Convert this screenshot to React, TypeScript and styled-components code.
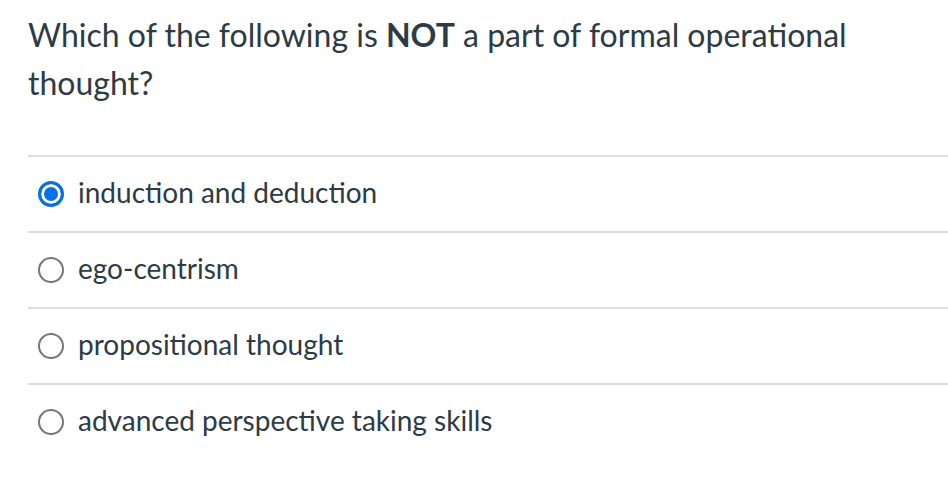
import styled, { createGlobalStyle } from 'styled-components'

const GlobalStyle = createGlobalStyle`
    html, body {
        margin: 0;
        padding: 0;
        background: #ffffff;
    }
    body {
        font-family: Lato, "Open Sans", "Liberation Sans", sans-serif;
        color: #2d3b45;
    }
`

const answers = [
    { id: 'a', text: 'induction and deduction', checked: true },
    { id: 'b', text: 'ego-centrism', checked: false },
    { id: 'c', text: 'propositional thought', checked: false },
    { id: 'd', text: 'advanced perspective taking skills', checked: false },
]

export default function App() {
    return (
        <>
            <GlobalStyle />
            <Quiz>
                <Question>
                    Which of the following is <strong>NOT</strong> a part of formal operational thought?
                </Question>
                <AnswerList>
                    {answers.map((a) => (
                        <AnswerRow key={a.id}>
                            <Radio $checked={a.checked} />
                            <AnswerText>{a.text}</AnswerText>
                        </AnswerRow>
                    ))}
                </AnswerList>
            </Quiz>
        </>
    )
}

const Quiz = styled.div`
    padding: 11px 0 0 28px;
`

const Question = styled.p`
    margin: 0 0 48px 0;
    max-width: 880px;
    font-size: 32px;
    line-height: 48px;

    strong {
        font-weight: 700;
    }
`

const AnswerList = styled.div`
    display: flex;
    flex-direction: column;
`

const AnswerRow = styled.div`
    display: flex;
    align-items: center;
    height: 74px;
    border-top: 2px solid #dddddd;
    padding-left: 10px;
`

const Radio = styled.span<{ $checked: boolean }>`
    box-sizing: border-box;
    flex: none;
    width: 26px;
    height: 26px;
    border-radius: 50%;
    border: ${(p) => (p.$checked ? '3px solid #0770e8' : '2px solid #777777')};
    background: ${(p) => (p.$checked ? '#0770e8' : '#ffffff')};
    box-shadow: ${(p) => (p.$checked ? 'inset 0 0 0 3px #ffffff' : 'none')};
    margin-right: 14px;
`

const AnswerText = styled.span`
    font-size: 28px;
    line-height: 36px;
    margin-bottom: 5px;
`
